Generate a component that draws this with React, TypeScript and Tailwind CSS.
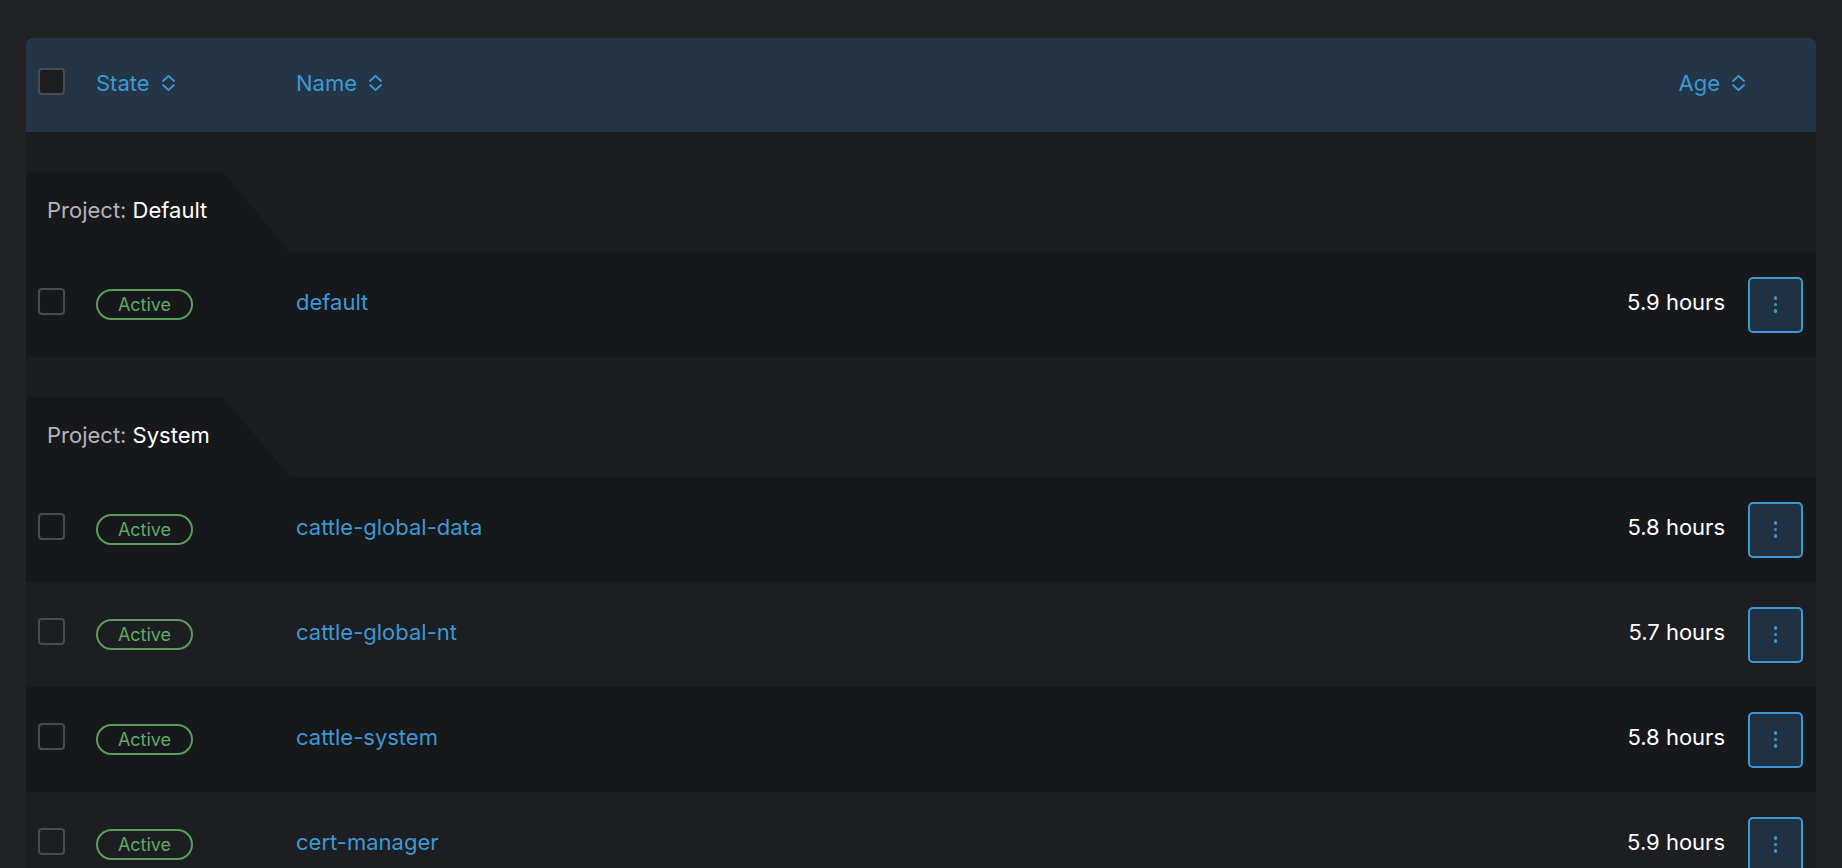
type Ns = { name: string; age: string };

const groups: { project: string; rows: Ns[] }[] = [
  { project: "Default", rows: [{ name: "default", age: "5.9 hours" }] },
  {
    project: "System",
    rows: [
      { name: "cattle-global-data", age: "5.8 hours" },
      { name: "cattle-global-nt", age: "5.7 hours" },
      { name: "cattle-system", age: "5.8 hours" },
      { name: "cert-manager", age: "5.9 hours" },
    ],
  },
];

const SortIcon = () => (
  <svg width="15" height="18" viewBox="0 0 15 18" fill="none" stroke="currentColor" strokeWidth="1.8" strokeLinecap="round" strokeLinejoin="round">
    <path d="M2 7 L7.5 1.8 L13 7" />
    <path d="M2 11 L7.5 16.2 L13 11" />
  </svg>
);

export default function App() {
  return (
    <div className="min-h-screen bg-[#212226] px-[26px] pt-[38px] font-['Inter',sans-serif]">
      <div className="bg-[#1c1d21]">
        {/* header */}
        <div className="flex h-[94px] items-center rounded-t-[6px] bg-[#243548] pr-[13px] pl-[12px] text-[22px] text-[#3d98d3]">
          <div className="w-[58px]">
            <div className="mb-[7px] h-[27px] w-[27px] rounded-[4px] border-2 border-[#4a4b50] bg-[#1d1e22]" />
          </div>
          <div className="mb-[4px] flex w-[200px] items-center gap-[11px]">
            State <SortIcon />
          </div>
          <div className="mb-[4px] flex flex-1 items-center gap-[11px]">
            Name <SortIcon />
          </div>
          <div className="mr-[57px] mb-[4px] flex items-center gap-[11px]">
            Age <SortIcon />
          </div>
        </div>

        {groups.map((g) => (
          <div key={g.project} className="pt-[40px]">
            <div
              className="flex h-[80px] w-[264px] items-center rounded-tl-[5px] bg-[#17181c] pb-[3px] pl-[21px] text-[22px]"
              style={{ clipPath: "polygon(0 0, 197px 0, 264px 100%, 0 100%)" }}
            >
              <span className="text-[#b4b4ba]">Project:&nbsp;</span>
              <span className="text-white">{g.project}</span>
            </div>
            {g.rows.map((r, i) => (
              <div
                key={r.name}
                className={`flex h-[105px] items-center pr-[13px] pl-[12px] ${
                  i % 2 === 0 ? "bg-[#17181c]" : "bg-[#1d1e22]"
                }`}
              >
                <div className="w-[58px]">
                  <div className="mb-[7px] h-[27px] w-[27px] rounded-[4px] border-2 border-[#4a4b50]" />
                </div>
                <div className="w-[200px]">
                  <span className="inline-flex h-[31px] w-[97px] items-center justify-center rounded-full border-2 border-[#5a9e5d] pb-[1px] text-[18px] text-[#62a866]">
                    Active
                  </span>
                </div>
                <div className="mb-[4px] flex-1 text-[22px] text-[#3d98d3]">{r.name}</div>
                <div className="mb-[4px] pr-[23px] text-[22px] text-white">{r.age}</div>
                <button
                  type="button"
                  className="flex h-[56px] w-[55px] flex-col items-center justify-center gap-[3px] rounded-[5px] border-2 border-[#3d98d3] bg-[#1f3143]"
                >
                  <span className="h-[3.5px] w-[3.5px] rounded-full bg-[#3d98d3]" />
                  <span className="h-[3.5px] w-[3.5px] rounded-full bg-[#3d98d3]" />
                  <span className="h-[3.5px] w-[3.5px] rounded-full bg-[#3d98d3]" />
                </button>
              </div>
            ))}
          </div>
        ))}
      </div>
    </div>
  );
}
